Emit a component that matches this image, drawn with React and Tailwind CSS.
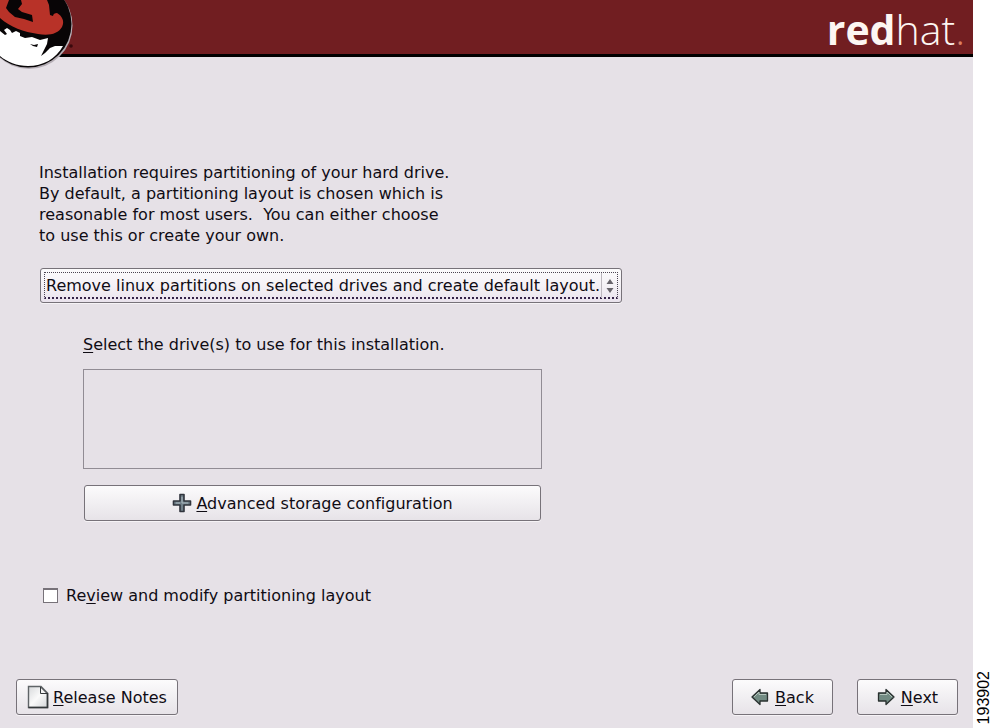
import { useState } from 'react'

const buttonBase =
  'flex h-9 items-center rounded-[3px] border border-[#777279] bg-linear-to-b from-[#fcfbfc] via-[#f1eff2] to-[#e7e3e8] shadow-[0_1px_0_#f6f3f6]'

const layouts = [
  'Remove linux partitions on selected drives and create default layout.',
  'Remove all partitions on selected drives and create default layout.',
  'Use free space on selected drives and create default layout.',
  'Create custom layout.'
]

const intro = `Installation requires partitioning of your hard drive.
By default, a partitioning layout is chosen which is
reasonable for most users.  You can either choose
to use this or create your own.`

function Key({ children }) {
  return <span className="underline decoration-1 underline-offset-2">{children}</span>
}

function HatLogo() {
  return (
    <svg viewBox="0 0 80 72" className="absolute top-0 left-0 h-[72px] w-20" aria-hidden="true">
      <circle cx="29" cy="25.5" r="43.5" fill="#b5aeb5" />
      <circle cx="28" cy="24" r="43.5" fill="#080506" />
      <path
        d="M0 31 L5 35 L7 34 L4 30 L7 28 L10 30 L12 33 L16 31 L20 33 L20 36 L25 38 L32 37 L40 40 L48 38 L47 44 L44 50 L41 56 L45 53 L50 48 L55 46 L63 46 C56 59 43 66 28 66 C17 66 7 62 0 56 Z"
        fill="#fff"
      />
      <path d="M30 44 L34 45 L38 44 L37 47 L33 46 Z" fill="#080506" />
      <path
        d="M0 8 H6 L9 12 L15 17 L24 19 L33 22 L32 15 L22 12 L18 9 L22 4 L21 0 H47 L49 5 L50 15 L53 16 C53 14 55 13 57 13 C62 16 65 21 62 27 C58 34 49 36 38 34 C24 32 10 27 0 18 Z"
        fill="#b83228"
      />
      <path d="M0 0 H9 L6 8 H0 Z" fill="#b83228" />
      <circle cx="71" cy="46" r="1.8" fill="#39090d" />
    </svg>
  )
}

function PlusIcon() {
  return (
    <svg viewBox="0 0 20 20" className="h-5 w-5" aria-hidden="true">
      <path d="M8 1.5 H12 V8 H18.5 V12 H12 V18.5 H8 V12 H1.5 V8 H8 Z" fill="#71808a" stroke="#30343d" strokeWidth="1.6" strokeLinejoin="round" />
      <path d="M10 4 V10 H16 M4 10 H8" stroke="#a9b6bd" fill="none" />
    </svg>
  )
}

function PageIcon() {
  return (
    <svg viewBox="0 0 22 24" className="h-6 w-[22px]" aria-hidden="true">
      <defs>
        <linearGradient id="page" x1="0" y1="0" x2="1" y2="1">
          <stop offset="0" stopColor="#d7d9db" />
          <stop offset="0.5" stopColor="#fafafa" />
          <stop offset="1" stopColor="#d3d5d8" />
        </linearGradient>
      </defs>
      <path d="M1.5 1.5 H14 L20.5 8 V22.5 H1.5 Z" fill="url(#page)" stroke="#5f6467" strokeWidth="1.4" />
      <path d="M20.5 8 V22.5 H1.5" fill="none" stroke="#34383b" strokeWidth="1.6" />
      <path d="M13.5 2 V8.5 H20 Z" fill="#f4f4f4" stroke="#34383b" strokeLinejoin="round" />
    </svg>
  )
}

function ArrowIcon({ right }) {
  return (
    <svg viewBox="0 0 18 18" className={right ? 'h-[18px] w-[18px] -scale-x-100' : 'h-[18px] w-[18px]'} aria-hidden="true">
      <path d="M1 9 L9 1.5 V5 H16.5 V13 H9 V16.5 Z" fill="#728b83" stroke="#29302f" strokeWidth="1.3" strokeLinejoin="round" />
      <path d="M3 9 L8 4 V6.5 H15" fill="none" stroke="#b4c4bc" />
    </svg>
  )
}

export default function App() {
  const [layout, setLayout] = useState(layouts[0])
  const [review, setReview] = useState(false)

  return (
    <div className="flex min-h-screen bg-white font-['DejaVu_Sans',sans-serif] text-base leading-[21px] text-[#100c14] [font-variant-ligatures:none]">
      <div className="flex min-w-0 flex-1 flex-col bg-[#e6e1e7]">
        <header className="relative flex h-[57px] items-center justify-end border-b-3 border-black bg-[#711e21] pt-1 pr-2">
          <HatLogo />
          <div className="font-['Open_Sans',sans-serif] text-[41px] leading-[50px] text-[#fdf6f2]">
            <span className="font-bold">red</span>
            <span className="font-light">hat</span>
            <span className="font-light text-[#dc8064]">.</span>
          </div>
        </header>

        <main className="flex flex-col items-start px-10 pt-[105px]">
          <p className="-ml-px whitespace-pre-wrap">{intro}</p>

          <div className="relative mt-[22px] rounded-[3px] border border-[#777279] bg-linear-to-b from-[#fcfbfc] via-[#f5f2f6] to-[#e9e2ec] p-[3px] shadow-[0_1px_0_#f6f3f6]">
            <select
              value={layout}
              onChange={(e) => setLayout(e.target.value)}
              aria-label="Partitioning layout"
              className="block h-[27px] w-[574px] appearance-none border border-b-2 border-dotted border-[#4b4452] border-b-[#352348] pt-px pl-px outline-none"
            >
              {layouts.map((name) => (
                <option key={name}>{name}</option>
              ))}
            </select>
            <div className="pointer-events-none absolute inset-y-1 right-1 flex w-4 items-center justify-center border-l border-[#bdb8bf]">
              <svg viewBox="0 0 8 14" className="h-3.5 w-2" aria-hidden="true">
                <path d="M4 0 L7.5 5 H0.5 Z M0.5 9 H7.5 L4 14 Z" fill="#68646b" />
              </svg>
            </div>
          </div>

          <div className="mt-[31px] ml-[43px] w-[459px]">
            <p id="drives">
              <Key>S</Key>elect the drive(s) to use for this installation.
            </p>
            <div role="listbox" aria-labelledby="drives" className="mt-3.5 h-[100px] border border-[#918c94]" />
            <button className={`${buttonBase} mx-px mt-4 w-[457px] justify-center gap-1`}>
              <PlusIcon />
              <span>
                <Key>A</Key>dvanced storage configuration
              </span>
            </button>
          </div>

          <label className="mt-16 ml-[3px] flex items-center gap-2">
            <input
              type="checkbox"
              checked={review}
              onChange={(e) => setReview(e.target.checked)}
              className="h-[15px] w-[15px] appearance-none border border-t-2 border-[#777279] bg-white checked:bg-[#4b4452]"
            />
            <span>
              Re<Key>v</Key>iew and modify partitioning layout
            </span>
          </label>
        </main>

        <footer className="mt-auto flex items-center pt-6 pr-[15px] pb-[13px] pl-4">
          <button className={`${buttonBase} w-[162px] justify-center gap-1`}>
            <PageIcon />
            <span>
              <Key>R</Key>elease Notes
            </span>
          </button>
          <div className="ml-auto flex gap-6">
            <button className={`${buttonBase} w-[101px] justify-center gap-1.5`}>
              <ArrowIcon />
              <span>
                <Key>B</Key>ack
              </span>
            </button>
            <button className={`${buttonBase} w-[101px] justify-center gap-1.5`}>
              <ArrowIcon right />
              <span>
                <Key>N</Key>ext
              </span>
            </button>
          </div>
        </footer>
      </div>

      <aside className="flex w-[25px] items-end justify-center pr-1 pb-1">
        <span className="rotate-180 font-['Liberation_Sans',sans-serif] text-base leading-5 text-black [writing-mode:vertical-rl]">193902</span>
      </aside>
    </div>
  )
}
